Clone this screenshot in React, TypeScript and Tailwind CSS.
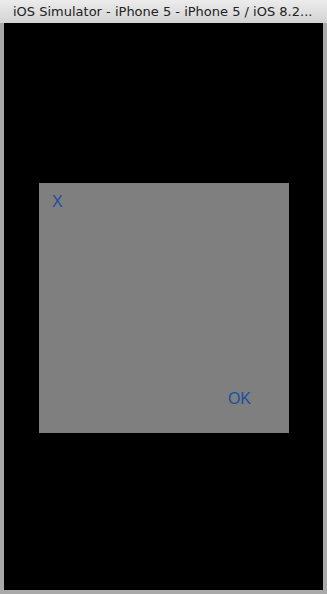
export default function App() {
  return (
    <div className="w-[327px] h-[594px] bg-[#cfcfcf] flex flex-col overflow-hidden" style={{ fontFamily: '"DejaVu Sans", sans-serif' }}>
      {/* title bar */}
      <div className="h-[23px] shrink-0 flex items-center pl-[13px] pr-[4px] bg-gradient-to-b from-[#ececec] to-[#d3d3d3] text-[13px] text-[#222] whitespace-nowrap overflow-hidden">
        iOS Simulator - iPhone 5 - iPhone 5 / iOS 8.2...
      </div>
      <div className="flex-1 flex px-[4px] pb-[4px] bg-[#a9a9a9]">
        <div className="flex-1 bg-black flex flex-col pt-[160px] pl-[35px]">
          {/* alert box */}
          <div className="w-[250px] h-[250px] bg-[#7f7f7f] flex flex-col justify-between" style={{ fontFamily: '"Liberation Sans", Arial, sans-serif' }}>
            <div className="pl-[13px] pt-[11px] text-[16px] text-[#1c4f9d] leading-none">X</div>
            <div className="self-end pr-[38px] pb-[26px] text-[16px] text-[#1c4f9d] leading-none">OK</div>
          </div>
        </div>
      </div>
    </div>
  )
}
